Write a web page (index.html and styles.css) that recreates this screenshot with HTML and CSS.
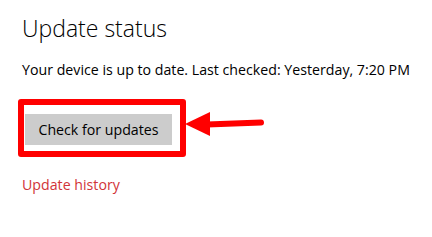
FILE: index.html
```html
<!DOCTYPE html>
<html>
<head>
<meta charset="utf-8">
<link rel="stylesheet" href="styles.css">
</head>
<body>
<div class="page">
  <h1 class="title">Update status</h1>
  <p class="status">Your device is up to date. Last checked: Yesterday, 7:20 PM</p>
  <div class="action-row">
    <div class="highlight">
      <button class="btn">Check for updates</button>
    </div>
    <svg class="arrow" width="80" height="26" viewBox="0 0 80 26">
      <polygon points="0,13 25,1 25,25" fill="#ff0000"/>
      <line x1="22" y1="13.5" x2="76" y2="11.5" stroke="#ff0000" stroke-width="6" stroke-linecap="round"/>
    </svg>
  </div>
  <a class="history" href="#">Update history</a>
</div>
</body>
</html>
```

FILE: styles.css
```css
html, body {
  margin: 0;
  padding: 0;
  background: #ffffff;
}
.page {
  font-family: "Segoe UI", "Open Sans", "Noto Sans", sans-serif;
  padding: 12px 0 0 22px;
  color: #000;
}
.title {
  margin: 0;
  font-size: 23px;
  font-weight: 300;
  line-height: 32px;
}
.status {
  margin: 16px 0 0 0;
  font-size: 14.2px;
  line-height: 20px;
}
.action-row {
  display: flex;
  align-items: center;
  margin: 19px 0 0 -4px;
}
.highlight {
  border: 6px solid #ff0000;
  border-radius: 3px;
  padding: 9px 8px 6px 1px;
}
.btn {
  display: block;
  width: 147px;
  height: 31px;
  border: none;
  background: #cccccc;
  font-family: inherit;
  font-size: 14.2px;
  color: #000;
  padding: 0;
}
.arrow {
  display: block;
  margin-left: -1px;
  margin-top: -8px;
}
.history {
  display: block;
  margin-top: 18px;
  font-size: 14.2px;
  line-height: 20px;
  color: #d13438;
  text-decoration: none;
}
```
